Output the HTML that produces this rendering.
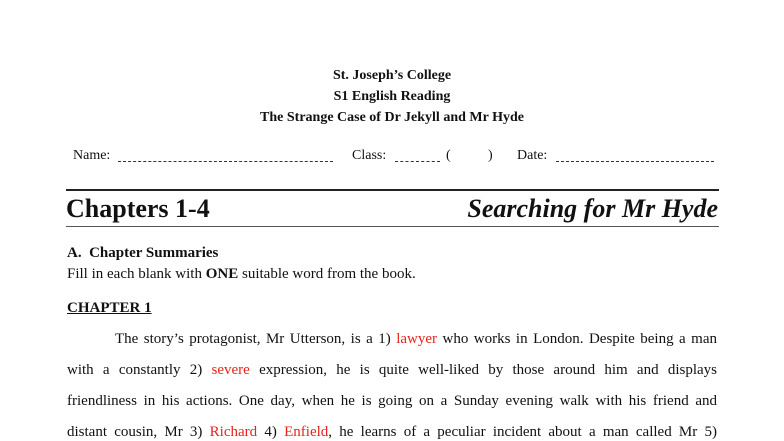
<!DOCTYPE html>
<html><head><style>
body{margin:0;width:784px;height:441px;background:#fff;overflow:hidden;font-family:"Liberation Serif",serif;color:#111;position:relative}
.a{position:absolute;white-space:nowrap}
.c{left:0;width:784px;text-align:center;font-weight:bold;font-size:14px}
.j{position:absolute;left:67px;width:650px;font-size:15px;text-align:justify;text-align-last:justify;white-space:nowrap}
.r{color:#e8221b}
.u{position:absolute;top:161px;height:0;border-top:1px dashed #333}
</style></head><body>
<div class="a c" style="top:68px">St. Joseph’s College</div>
<div class="a c" style="top:89px">S1 English Reading</div>
<div class="a c" style="top:110px">The Strange Case of Dr Jekyll and Mr Hyde</div>
<div class="a" style="left:73px;top:148px;font-size:14px">Name:</div>
<div class="u" style="left:118px;width:215px"></div>
<div class="a" style="left:352px;top:148px;font-size:14px">Class:</div>
<div class="u" style="left:395px;width:45px"></div>
<div class="a" style="left:446px;top:148px;font-size:14px">(</div>
<div class="a" style="left:488px;top:148px;font-size:14px">)</div>
<div class="a" style="left:517px;top:148px;font-size:14px">Date:</div>
<div class="u" style="left:556px;width:158px"></div>
<div class="a" style="left:66px;top:189px;width:653px;height:2px;background:#222"></div>
<div class="a" style="left:66px;top:194px;font-size:26px;font-weight:bold">Chapters 1-4</div>
<div class="a" style="right:66px;top:194px;font-size:26px;font-weight:bold;font-style:italic">Searching for Mr Hyde</div>
<div class="a" style="left:66px;top:226px;width:653px;height:1px;background:#555"></div>
<div class="a" style="left:67px;top:245px;font-size:15px;font-weight:bold">A.&nbsp; Chapter Summaries</div>
<div class="a" style="left:67px;top:266px;font-size:15px">Fill in each blank with <b>ONE</b> suitable word from the book.</div>
<div class="a" style="left:67px;top:300px;font-size:15px;font-weight:bold;text-decoration:underline">CHAPTER 1</div>
<div class="j" style="top:331px;left:115px;width:602px">The story’s protagonist, Mr Utterson, is a 1) <span class="r">lawyer</span> who works in London. Despite being a man</div>
<div class="j" style="top:362px">with a constantly 2) <span class="r">severe</span> expression, he is quite well-liked by those around him and displays</div>
<div class="j" style="top:393px">friendliness in his actions. One day, when he is going on a Sunday evening walk with his friend and</div>
<div class="j" style="top:424px">distant cousin, Mr 3) <span class="r">Richard</span> 4) <span class="r">Enfield</span>, he learns of a peculiar incident about a man called Mr 5)</div>
</body></html>
